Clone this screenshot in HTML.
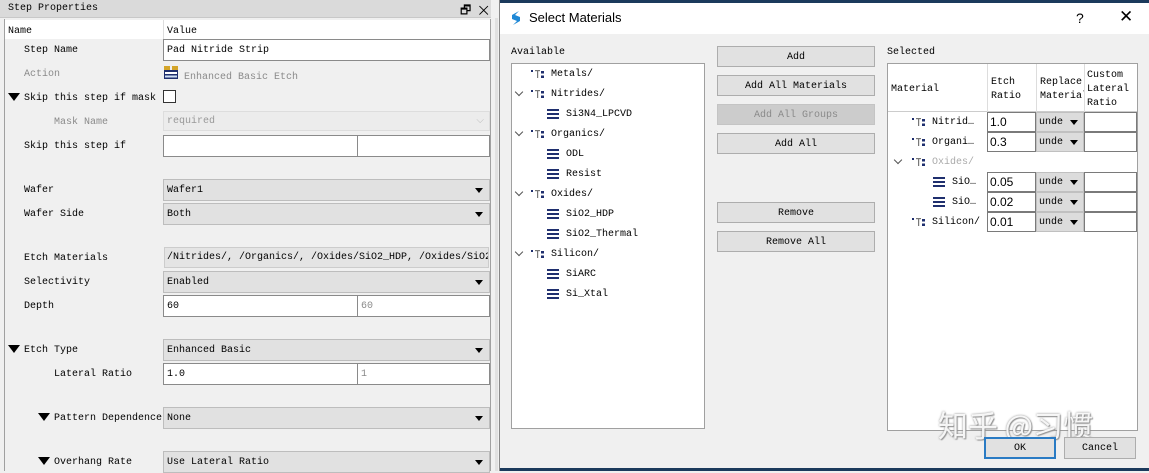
<!DOCTYPE html>
<html><head><meta charset="utf-8"><style>
*{box-sizing:border-box;margin:0;padding:0}
body{width:1149px;height:471px;overflow:hidden;background:#f0f0f0;position:relative;font:10px "Liberation Mono","Noto Sans CJK SC",monospace;color:#000}
.a{position:absolute;white-space:nowrap}
.lbl{position:absolute;white-space:nowrap;line-height:14px;margin-top:2px}
.f{position:absolute;height:22px;border:1px solid #8a8a8a;background:#fff;line-height:21px;padding-left:3px;overflow:hidden;white-space:nowrap}
.cb{position:absolute;height:22px;border:1px solid #bdbdbd;background:#e1e1e1;line-height:21px;padding-left:3px;white-space:nowrap;overflow:hidden}
.cb:after{content:"";position:absolute;right:6px;top:8px;border-left:4px solid transparent;border-right:4px solid transparent;border-top:5px solid #000}
.tri{display:inline-block;width:0;height:0;border-left:6px solid transparent;border-right:6px solid transparent;border-top:8px solid #000;margin-right:4px;vertical-align:middle}
.btn{position:absolute;left:717px;width:158px;height:21px;border:1px solid #adadad;background:#e1e1e1;text-align:center;line-height:21px}
.gray{color:#8a8a8a}
.chev{position:absolute;width:6px;height:6px;border-right:1.5px solid #555;border-bottom:1.5px solid #555;transform:rotate(45deg)}
.cell{position:absolute;height:20px;border:1px solid #7a7a7a;background:#fff;line-height:19px;padding-left:2px;font-family:"Liberation Sans",sans-serif;font-size:12px}
.dd{position:absolute;height:20px;background:#dcdcdc;border:1px solid #c0c0c0;line-height:19px;padding-left:2px}
.dd:after{content:"";position:absolute;right:5px;top:7px;border-left:4px solid transparent;border-right:4px solid transparent;border-top:5px solid #000}
</style></head><body>
<svg width="0" height="0" style="position:absolute"><defs>
<symbol id="fo" viewBox="0 0 14 10"><rect x="0" y="1" width="2" height="2" fill="#1f2f6e"/><rect x="4" y="1" width="5" height="1.2" fill="#777"/><rect x="6" y="1" width="1.2" height="8" fill="#777"/><rect x="10" y="2" width="3" height="2.5" fill="#1f2f6e"/><rect x="10" y="6.5" width="3" height="2.5" fill="#1f2f6e"/></symbol>
<symbol id="li" viewBox="0 0 12 10"><rect x="0" y="0" width="12" height="2" fill="#1f2f6e"/><rect x="0" y="4" width="12" height="2" fill="#1f2f6e"/><rect x="0" y="8" width="12" height="2" fill="#1f2f6e"/></symbol>
</defs></svg>

<div class="a" style="left:0;top:0;width:491px;height:18px;background:#dadada;border-bottom:1px solid #c8c8c8"></div>
<div class="a" style="left:8px;top:3px">Step Properties</div>
<div class="a" style="left:460px;top:1px;font-size:12px">🗗 ✕</div>
<div class="a" style="left:4px;top:19px;width:487px;height:452px;border-left:1px solid #a0a0a0;border-right:1px solid #a0a0a0;background:#f0f0f0"></div>
<div class="a" style="left:5px;top:20px;width:485px;height:19px;background:#fff"></div>
<div class="lbl" style="left:8px;top:23px">Name</div>
<div class="a" style="left:163px;top:20px;width:1px;height:19px;background:#ddd"></div>
<div class="lbl" style="left:167px;top:23px">Value</div>

<div class="lbl" style="left:24px;top:42px">Step Name</div>
<div class="f" style="left:163px;top:39px;width:327px">Pad Nitride Strip</div>
<div class="lbl gray" style="left:24px;top:66px">Action</div>
<svg class="a" style="left:164px;top:66px" width="14" height="13"><rect x="0" y="0" width="6" height="4" fill="#d4a52a"/><rect x="8" y="0" width="6" height="4" fill="#d4a52a"/><rect x="0" y="4" width="14" height="9" fill="#1f2f6e"/><rect x="1" y="6" width="12" height="2" fill="#fff"/><rect x="1" y="9.5" width="12" height="2" fill="#cfe0f5"/></svg>
<div class="lbl gray" style="left:184px;top:69px">Enhanced Basic Etch</div>
<div class="lbl" style="left:8px;top:90px"><span class="tri"></span>Skip this step if mask</div>
<div class="a" style="left:163px;top:90px;width:13px;height:13px;border:1px solid #333;background:#fff"></div>
<div class="lbl gray" style="left:54px;top:114px">Mask Name</div>
<div class="a" style="left:163px;top:111px;width:327px;height:20px;background:#ececec;border:1px solid #ddd;color:#999;line-height:20px;padding-left:3px">required<span style="position:absolute;right:5px;color:#bbb">⌵</span></div>
<div class="lbl" style="left:24px;top:138px">Skip this step if</div>
<div class="f" style="left:163px;top:135px;width:195px"></div>
<div class="f" style="left:357px;top:135px;width:133px"></div>

<div class="lbl" style="left:24px;top:182px">Wafer</div>
<div class="cb" style="left:163px;top:179px;width:327px">Wafer1</div>
<div class="lbl" style="left:24px;top:206px">Wafer Side</div>
<div class="cb" style="left:163px;top:203px;width:327px">Both</div>
<div class="lbl" style="left:24px;top:250px">Etch Materials</div>
<div class="a" style="left:164px;top:247px;width:325px;height:21px;background:#e4e4e4;border:1px solid #ccc;line-height:20px;padding-left:2px;overflow:hidden">/Nitrides/, /Organics/, /Oxides/SiO2_HDP, /Oxides/SiO2</div>
<div class="lbl" style="left:24px;top:274px">Selectivity</div>
<div class="cb" style="left:163px;top:271px;width:327px">Enabled</div>
<div class="lbl" style="left:24px;top:298px">Depth</div>
<div class="f" style="left:163px;top:295px;width:195px">60</div>
<div class="f gray" style="left:357px;top:295px;width:133px">60</div>
<div class="lbl" style="left:8px;top:342px"><span class="tri"></span>Etch Type</div>
<div class="cb" style="left:163px;top:339px;width:327px">Enhanced Basic</div>
<div class="lbl" style="left:54px;top:366px">Lateral Ratio</div>
<div class="f" style="left:163px;top:363px;width:195px">1.0</div>
<div class="f gray" style="left:357px;top:363px;width:133px">1</div>
<div class="lbl" style="left:38px;top:410px;width:124px;overflow:hidden"><span class="tri"></span>Pattern Dependence</div>
<div class="cb" style="left:163px;top:407px;width:327px">None</div>
<div class="lbl" style="left:38px;top:454px"><span class="tri"></span>Overhang Rate</div>
<div class="cb" style="left:163px;top:451px;width:327px">Use Lateral Ratio</div>

<div class="a" style="left:495px;top:18px;width:3px;height:453px;background:#e0e0e0"></div>

<div class="a" style="left:499px;top:0;width:650px;height:471px;background:#f0f0f0;border-left:1px solid #888"></div>
<div class="a" style="left:500px;top:0;width:649px;height:3px;background:#1b3a5c"></div>
<div class="a" style="left:500px;top:3px;width:649px;height:31px;background:#fff"></div>
<svg class="a" style="left:510px;top:10px" width="12" height="16"><path d="M9 1 L2 5 L2 9 L7 11 L3 15 L10 11 L10 7 L5 5 Z" fill="#1e88d6"/></svg>
<div class="a" style="left:529px;top:10px;font:13px 'Liberation Sans',sans-serif">Select Materials</div>
<div class="a" style="left:1076px;top:10px;font:14px 'Liberation Sans',sans-serif">?</div>
<div class="a" style="left:1119px;top:7px;font:17px 'Liberation Sans',sans-serif">✕</div>

<div class="lbl" style="left:511px;top:44px">Available</div>
<div class="a" style="left:511px;top:63px;width:194px;height:366px;background:#fff;border:1px solid #a0a0a0"></div>
<div class="chev" style="left:516px;top:89px"></div>
<div class="chev" style="left:516px;top:129px"></div>
<div class="chev" style="left:516px;top:189px"></div>
<div class="chev" style="left:516px;top:249px"></div>
<svg class="a" style="left:531px;top:69px" width="14" height="10"><use href="#fo"/></svg><div class="lbl" style="left:551px;top:66px">Metals/</div>
<svg class="a" style="left:531px;top:89px" width="14" height="10"><use href="#fo"/></svg><div class="lbl" style="left:551px;top:86px">Nitrides/</div>
<svg class="a" style="left:547px;top:109px" width="12" height="10"><use href="#li"/></svg><div class="lbl" style="left:566px;top:106px">Si3N4_LPCVD</div>
<svg class="a" style="left:531px;top:129px" width="14" height="10"><use href="#fo"/></svg><div class="lbl" style="left:551px;top:126px">Organics/</div>
<svg class="a" style="left:547px;top:149px" width="12" height="10"><use href="#li"/></svg><div class="lbl" style="left:566px;top:146px">ODL</div>
<svg class="a" style="left:547px;top:169px" width="12" height="10"><use href="#li"/></svg><div class="lbl" style="left:566px;top:166px">Resist</div>
<svg class="a" style="left:531px;top:189px" width="14" height="10"><use href="#fo"/></svg><div class="lbl" style="left:551px;top:186px">Oxides/</div>
<svg class="a" style="left:547px;top:209px" width="12" height="10"><use href="#li"/></svg><div class="lbl" style="left:566px;top:206px">SiO2_HDP</div>
<svg class="a" style="left:547px;top:229px" width="12" height="10"><use href="#li"/></svg><div class="lbl" style="left:566px;top:226px">SiO2_Thermal</div>
<svg class="a" style="left:531px;top:249px" width="14" height="10"><use href="#fo"/></svg><div class="lbl" style="left:551px;top:246px">Silicon/</div>
<svg class="a" style="left:547px;top:269px" width="12" height="10"><use href="#li"/></svg><div class="lbl" style="left:566px;top:266px">SiARC</div>
<svg class="a" style="left:547px;top:289px" width="12" height="10"><use href="#li"/></svg><div class="lbl" style="left:566px;top:286px">Si_Xtal</div>

<div class="btn" style="top:46px">Add</div>
<div class="btn" style="top:75px">Add All Materials</div>
<div class="btn" style="top:104px;background:#cccccc;color:#8a8a8a;border-color:#c4c4c4">Add All Groups</div>
<div class="btn" style="top:133px">Add All</div>
<div class="btn" style="top:202px">Remove</div>
<div class="btn" style="top:231px">Remove All</div>

<div class="lbl" style="left:887px;top:44px">Selected</div>
<div class="a" style="left:887px;top:63px;width:251px;height:368px;background:#fff;border:1px solid #a0a0a0"></div>
<div class="a" style="left:888px;top:64px;width:249px;height:48px;background:#fff;border-bottom:1px solid #ccc"></div>
<div class="a" style="left:987px;top:64px;width:1px;height:48px;background:#ddd"></div>
<div class="a" style="left:1036px;top:64px;width:1px;height:48px;background:#ddd"></div>
<div class="a" style="left:1084px;top:64px;width:1px;height:48px;background:#ddd"></div>
<div class="lbl" style="left:891px;top:81px">Material</div>
<div class="lbl" style="left:991px;top:74px">Etch<br>Ratio</div>
<div class="lbl" style="left:1040px;top:74px;width:44px;overflow:hidden">Replace<br>Materials</div>
<div class="lbl" style="left:1087px;top:67px">Custom<br>Lateral<br>Ratio</div>

<svg class="a" style="left:912px;top:117px" width="14" height="10"><use href="#fo"/></svg><div class="lbl" style="left:932px;top:114px">Nitrid…</div>
<svg class="a" style="left:912px;top:137px" width="14" height="10"><use href="#fo"/></svg><div class="lbl" style="left:932px;top:134px">Organi…</div>
<div class="chev" style="left:895px;top:157px"></div>
<svg class="a" style="left:912px;top:157px" width="14" height="10"><use href="#fo"/></svg><div class="lbl gray" style="left:932px;top:154px;color:#aaa">Oxides/</div>
<svg class="a" style="left:933px;top:177px" width="12" height="10"><use href="#li"/></svg><div class="lbl" style="left:952px;top:174px">SiO…</div>
<svg class="a" style="left:933px;top:197px" width="12" height="10"><use href="#li"/></svg><div class="lbl" style="left:952px;top:194px">SiO…</div>
<svg class="a" style="left:912px;top:217px" width="14" height="10"><use href="#fo"/></svg><div class="lbl" style="left:932px;top:214px">Silicon/</div>

<div class="cell" style="left:987px;top:112px;width:49px">1.0</div>
<div class="dd" style="left:1036px;top:112px;width:48px">unde</div>
<div class="cell" style="left:1084px;top:112px;width:53px"></div>
<div class="cell" style="left:987px;top:132px;width:49px">0.3</div>
<div class="dd" style="left:1036px;top:132px;width:48px">unde</div>
<div class="cell" style="left:1084px;top:132px;width:53px"></div>
<div class="cell" style="left:987px;top:172px;width:49px">0.05</div>
<div class="dd" style="left:1036px;top:172px;width:48px">unde</div>
<div class="cell" style="left:1084px;top:172px;width:53px"></div>
<div class="cell" style="left:987px;top:192px;width:49px">0.02</div>
<div class="dd" style="left:1036px;top:192px;width:48px">unde</div>
<div class="cell" style="left:1084px;top:192px;width:53px"></div>
<div class="cell" style="left:987px;top:212px;width:49px">0.01</div>
<div class="dd" style="left:1036px;top:212px;width:48px">unde</div>
<div class="cell" style="left:1084px;top:212px;width:53px"></div>

<div class="a" style="left:938px;top:402px;font:30px 'Noto Sans CJK SC',sans-serif;color:rgba(255,255,255,0.9);text-shadow:0 0 2px #888,1px 1px 1px #999">知乎 @习惯</div>

<div class="a" style="left:984px;top:437px;width:72px;height:22px;border:2px solid #2a7bc4;background:#e1e1e1;text-align:center;line-height:19px">OK</div>
<div class="a" style="left:1064px;top:437px;width:72px;height:22px;border:1px solid #adadad;background:#e1e1e1;text-align:center;line-height:21px">Cancel</div>
<div class="a" style="left:500px;top:468px;width:649px;height:3px;background:#1b3a5c"></div>
</body></html>
